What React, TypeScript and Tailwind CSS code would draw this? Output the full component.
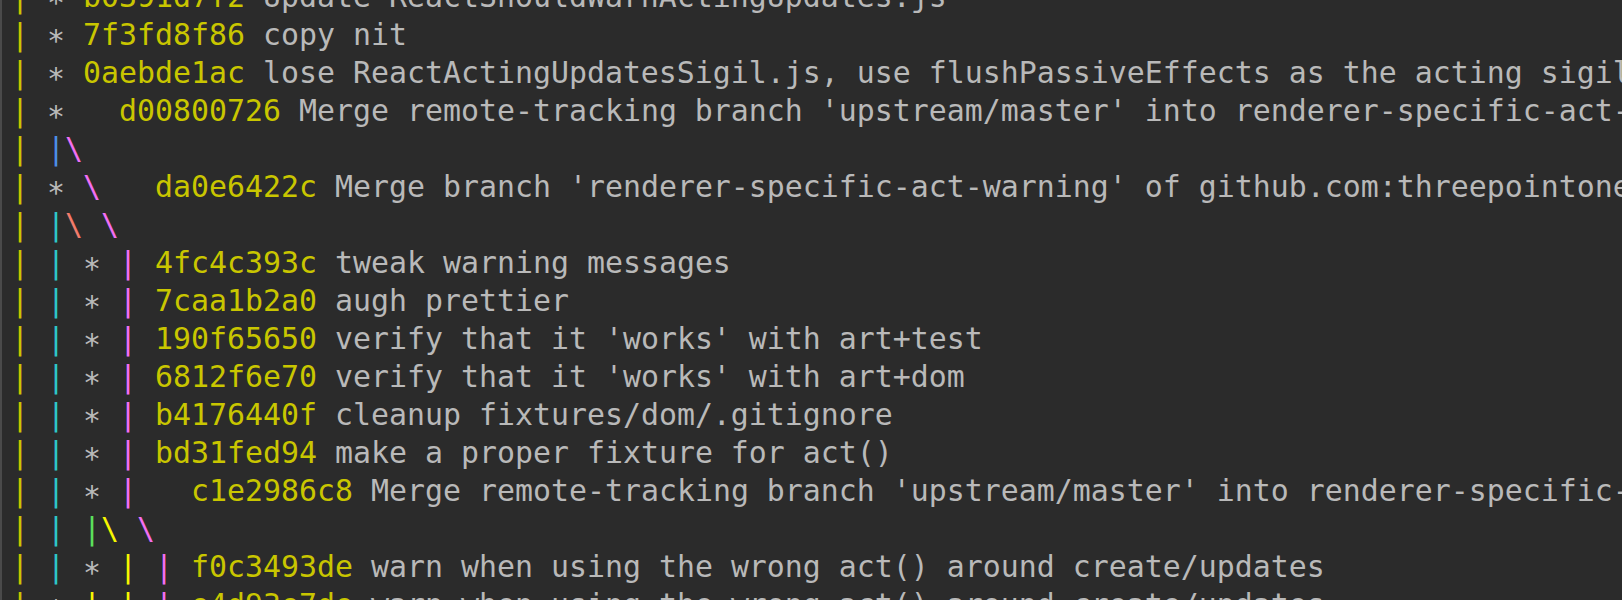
import React from "react";

// terminal palette
const Y = "text-[#c9c600]"; // graph lane 1 + hashes
const G = "text-[#b9b9b9]"; // messages
const B = "text-[#4d8fe6]";
const P = "text-[#f26ff2]";
const C = "text-[#2ec7c7]";
const O = "text-[#f27b6b]";
const N = "text-[#5ce05c]";
const BY = "text-[#f7f700]";
const S = "star"; // commit marker, drawn lower like Menlo's asterisk

type Seg = [string, string];

const rows: Seg[][] = [
  [["|", Y], [" ", G], ["*", S], [" ", G], ["b0391d7f2", Y], [" Update ReactShouldWarnActingUpdates.js", G]],
  [["|", Y], [" ", G], ["*", S], [" ", G], ["7f3fd8f86", Y], [" copy nit", G]],
  [
    ["|", Y],
    [" ", G],
    ["*", S],
    [" ", G],
    ["0aebde1ac", Y],
    [" lose ReactActingUpdatesSigil.js, use flushPassiveEffects as the acting sigil", G],
  ],
  [
    ["|", Y],
    [" ", G],
    ["*", S],
    ["   ", G],
    ["d00800726", Y],
    [" Merge remote-tracking branch 'upstream/master' into renderer-specific-act-warning", G],
  ],
  [["|", Y], [" ", G], ["|", B], ["\\", P]],
  [
    ["|", Y],
    [" ", G],
    ["*", S],
    [" ", G],
    ["\\", P],
    ["   ", G],
    ["da0e6422c", Y],
    [" Merge branch 'renderer-specific-act-warning' of github.com:threepointone/react", G],
  ],
  [["|", Y], [" ", G], ["|", C], ["\\", O], [" ", G], ["\\", P]],
  [["|", Y], [" ", G], ["|", C], [" ", G], ["*", S], [" ", G], ["|", P], [" ", G], ["4fc4c393c", Y], [" tweak warning messages", G]],
  [["|", Y], [" ", G], ["|", C], [" ", G], ["*", S], [" ", G], ["|", P], [" ", G], ["7caa1b2a0", Y], [" augh prettier", G]],
  [
    ["|", Y],
    [" ", G],
    ["|", C],
    [" ", G],
    ["*", S],
    [" ", G],
    ["|", P],
    [" ", G],
    ["190f65650", Y],
    [" verify that it 'works' with art+test", G],
  ],
  [
    ["|", Y],
    [" ", G],
    ["|", C],
    [" ", G],
    ["*", S],
    [" ", G],
    ["|", P],
    [" ", G],
    ["6812f6e70", Y],
    [" verify that it 'works' with art+dom", G],
  ],
  [
    ["|", Y],
    [" ", G],
    ["|", C],
    [" ", G],
    ["*", S],
    [" ", G],
    ["|", P],
    [" ", G],
    ["b4176440f", Y],
    [" cleanup fixtures/dom/.gitignore", G],
  ],
  [
    ["|", Y],
    [" ", G],
    ["|", C],
    [" ", G],
    ["*", S],
    [" ", G],
    ["|", P],
    [" ", G],
    ["bd31fed94", Y],
    [" make a proper fixture for act()", G],
  ],
  [
    ["|", Y],
    [" ", G],
    ["|", C],
    [" ", G],
    ["*", S],
    [" ", G],
    ["|", P],
    ["   ", G],
    ["c1e2986c8", Y],
    [" Merge remote-tracking branch 'upstream/master' into renderer-specific-act-warning", G],
  ],
  [["|", Y], [" ", G], ["|", C], [" ", G], ["|", N], ["\\", BY], [" ", G], ["\\", P]],
  [
    ["|", Y],
    [" ", G],
    ["|", C],
    [" ", G],
    ["*", S],
    [" ", G],
    ["|", BY],
    [" ", G],
    ["|", P],
    [" ", G],
    ["f0c3493de", Y],
    [" warn when using the wrong act() around create/updates", G],
  ],
  [
    ["|", Y],
    [" ", G],
    ["*", S],
    [" ", G],
    ["|", BY],
    [" ", G],
    ["|", BY],
    [" ", G],
    ["|", P],
    [" ", G],
    ["e4d93e7de", Y],
    [" warn when using the wrong act() around create/updates", G],
  ],
];

export default function App() {
  return (
    <div className="w-[1622px] h-[600px] overflow-hidden bg-[#2b2b2b] border-l-2 border-[#4a4a4a]">
      <div className="-mt-[22px] pl-[9px] font-['DejaVu_Sans_Mono',monospace] text-[29.9px] leading-[38px]">
        {rows.map((row, i) => (
          <div key={i} className="whitespace-pre">
            {row.map(([text, cls], j) =>
              cls === S ? (
                <span key={j} className="relative top-[6px] text-[#b9b9b9]">
                  {text}
                </span>
              ) : (
                <span key={j} className={cls}>
                  {text}
                </span>
              )
            )}
          </div>
        ))}
      </div>
    </div>
  );
}
